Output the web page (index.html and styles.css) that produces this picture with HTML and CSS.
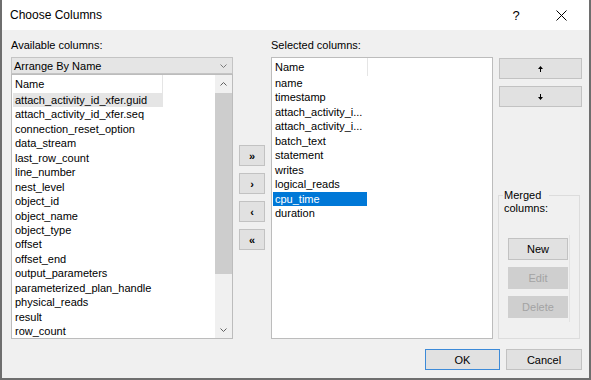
FILE: index.html
```html
<!DOCTYPE html>
<html lang="en">
<head>
<meta charset="UTF-8">
<title>Choose Columns</title>
<link rel="stylesheet" href="styles.css">
</head>
<body>
<div class="window">
  <div class="titlebar">
    <span class="title">Choose Columns</span>
    <span class="help">?</span>
    <svg class="close" width="11" height="11" viewBox="0 0 11 11"><path d="M0.5 0.5L10.5 10.5M10.5 0.5L0.5 10.5" stroke="#000" stroke-width="1" fill="none"/></svg>
  </div>

  <div class="main">
    <!-- available columns -->
    <div class="col col-list">
      <div class="label">Available columns:</div>
      <div class="combo">
        <span class="combo-text">Arrange By Name</span>
        <svg width="7" height="4" viewBox="0 0 7 4"><path d="M0.5 0.5L3.5 3.5L6.5 0.5" stroke="#7a7a7a" fill="none"/></svg>
      </div>
      <div class="list list-avail">
        <div class="list-body">
          <div class="list-head"><span class="head-cell head-wide">Name</span></div>
          <div class="row row-wide hot">attach_activity_id_xfer.guid</div>
          <div class="row row-wide">attach_activity_id_xfer.seq</div>
          <div class="row row-wide">connection_reset_option</div>
          <div class="row row-wide">data_stream</div>
          <div class="row row-wide">last_row_count</div>
          <div class="row row-wide">line_number</div>
          <div class="row row-wide">nest_level</div>
          <div class="row row-wide">object_id</div>
          <div class="row row-wide">object_name</div>
          <div class="row row-wide">object_type</div>
          <div class="row row-wide">offset</div>
          <div class="row row-wide">offset_end</div>
          <div class="row row-wide">output_parameters</div>
          <div class="row row-wide">parameterized_plan_handle</div>
          <div class="row row-wide">physical_reads</div>
          <div class="row row-wide">result</div>
          <div class="row row-wide">row_count</div>
        </div>
        <div class="scrollbar">
          <div class="sb-btn"><svg width="7" height="4" viewBox="0 0 7 4"><path d="M0.5 3.5L3.5 0.5L6.5 3.5" stroke="#606060" fill="none"/></svg></div>
          <div class="sb-track"><div class="sb-thumb"></div></div>
          <div class="sb-btn"><svg width="7" height="4" viewBox="0 0 7 4"><path d="M0.5 0.5L3.5 3.5L6.5 0.5" stroke="#606060" fill="none"/></svg></div>
        </div>
      </div>
    </div>

    <!-- move buttons -->
    <div class="col col-move">
      <button class="btn btn-move">&raquo;</button>
      <button class="btn btn-move">&rsaquo;</button>
      <button class="btn btn-move">&lsaquo;</button>
      <button class="btn btn-move">&laquo;</button>
    </div>

    <!-- selected columns -->
    <div class="col col-list">
      <div class="label">Selected columns:</div>
      <div class="list list-sel">
        <div class="list-body">
          <div class="list-head"><span class="head-cell head-narrow">Name</span></div>
          <div class="row row-narrow">name</div>
          <div class="row row-narrow">timestamp</div>
          <div class="row row-narrow">attach_activity_i...</div>
          <div class="row row-narrow">attach_activity_i...</div>
          <div class="row row-narrow">batch_text</div>
          <div class="row row-narrow">statement</div>
          <div class="row row-narrow">writes</div>
          <div class="row row-narrow">logical_reads</div>
          <div class="row row-narrow selected">cpu_time</div>
          <div class="row row-narrow">duration</div>
        </div>
      </div>
    </div>

    <!-- order + merged -->
    <div class="col col-side">
      <button class="btn btn-order first">
        <svg width="5" height="6" viewBox="0 0 5 6"><path d="M2.5 0L5 3H3V6H2V3H0Z" fill="#000"/></svg>
      </button>
      <button class="btn btn-order">
        <svg width="5" height="6" viewBox="0 0 5 6"><path d="M2.5 6L5 3H3V0H2V3H0Z" fill="#000"/></svg>
      </button>
      <div class="group">
        <div class="group-label">Merged<br>columns:</div>
        <div class="merged-btns">
          <button class="btn btn-merged">New</button>
          <button class="btn btn-merged" disabled>Edit</button>
          <button class="btn btn-merged" disabled>Delete</button>
        </div>
      </div>
    </div>
  </div>

  <div class="footer">
    <button class="btn btn-foot default">OK</button>
    <button class="btn btn-foot">Cancel</button>
  </div>
</div>
</body>
</html>
```

FILE: styles.css
```css
body {
  margin: 0;
  font-family: "Liberation Sans", Arial, sans-serif;
  font-size: 11px;
  color: #000;
}
.window {
  width: 591px;
  height: 380px;
  box-sizing: border-box;
  border: 2px solid #6e6e6e;
  border-top: none;
  background: #f0f0f0;
  display: flex;
  flex-direction: column;
}
.titlebar {
  height: 30px;
  flex: none;
  background: #fff;
  display: flex;
  align-items: center;
  padding-left: 8px;
  font-size: 12px;
}
.title {
  flex: 1;
}
.help {
  width: 10px;
  text-align: center;
  font-size: 13px;
  margin-right: 35px;
}
.close {
  margin-right: 22px;
}

.main {
  display: flex;
  padding: 8px 0 0 9px;
}
.col {
  display: flex;
  flex-direction: column;
}
.col-list {
  width: 222px;
}
.label {
  height: 14px;
  line-height: 14px;
  margin-bottom: 5px;
}
.col-list + .col-move,
.col-move + .col-list,
.col-list + .col-side {
  margin-left: 6px;
}

.combo {
  height: 17px;
  box-sizing: border-box;
  border: 1px solid #c4c4c4;
  background: #e5e5e5;
  display: flex;
  align-items: center;
  padding: 0 5px 0 2px;
}
.combo-text {
  flex: 1;
}

.list {
  box-sizing: border-box;
  border: 1px solid #bcbcbc;
  background: #fff;
  display: flex;
  overflow: hidden;
}
.list-avail {
  height: 265px;
}
.list-sel {
  height: 282px;
}
.list-body {
  flex: 1;
  overflow: hidden;
}
.list-head {
  height: 18px;
  display: flex;
}
.head-cell {
  box-sizing: border-box;
  height: 18px;
  line-height: 18px;
  padding-left: 3px;
  border-right: 1px solid #e5e5e5;
}
.head-wide {
  width: 151px;
}
.head-narrow {
  width: 96px;
}
.row {
  height: 14.45px;
  line-height: 14.45px;
  margin-left: 1px;
  padding-left: 2px;
  box-sizing: border-box;
  white-space: nowrap;
  overflow: hidden;
}
.row-wide {
  width: 150px;
}
.row-narrow {
  width: 94px;
}
.row.hot {
  background: #e5e5e5;
}
.row.selected {
  background: #0078d7;
  color: #fff;
}

.scrollbar {
  width: 17px;
  background: #f0f0f0;
  display: flex;
  flex-direction: column;
}
.sb-btn {
  height: 17px;
  display: flex;
  align-items: center;
  justify-content: center;
}
.sb-track {
  flex: 1;
}
.sb-thumb {
  margin-top: 1px;
  height: 181px;
  background: #cdcdcd;
}

.btn {
  font-family: inherit;
  font-size: 11px;
  color: #000;
  background: #e1e1e1;
  border: 1px solid #c2c2c2;
  padding: 0;
  margin: 0;
  box-sizing: border-box;
  display: flex;
  align-items: center;
  justify-content: center;
}
.btn:disabled {
  background: #cfcfcf;
  border-color: #cfcfcf;
  color: #a3a3a3;
}

.col-move {
  width: 26px;
  padding-top: 107px;
  gap: 7px;
}
.btn-move {
  width: 26px;
  height: 21px;
  font-size: 11px;
  font-weight: bold;
}

.col-side {
  width: 83px;
}
.btn-order {
  width: 83px;
  height: 21px;
  margin-top: 7px;
}
.btn-order.first {
  margin-top: 20px;
}

.group {
  margin-top: 88px;
  margin-left: -1px;
  width: 82px;
  height: 144px;
  box-sizing: border-box;
  border: 1px solid #dcdcdc;
}
.group-label {
  width: fit-content;
  margin: -7px 0 0 4px;
  padding: 0 1px;
  line-height: 13px;
  background: #f0f0f0;
}
.merged-btns {
  width: 62px;
  box-sizing: border-box;
  margin: 20px 0 0 9px;
  padding: 3px 0 4px;
  border-right: 1px solid #e3e3e3;
  display: flex;
  flex-direction: column;
  gap: 7px;
}
.btn-merged {
  width: 60px;
  height: 22px;
}

.footer {
  display: flex;
  justify-content: flex-end;
  gap: 6px;
  margin-top: 10px;
  padding-right: 7px;
}
.btn-foot {
  width: 75px;
  height: 21px;
}
.btn-foot + .btn-foot {
  width: 76px;
}
.btn-foot.default {
  border-color: #3c8ad8;
}
```
